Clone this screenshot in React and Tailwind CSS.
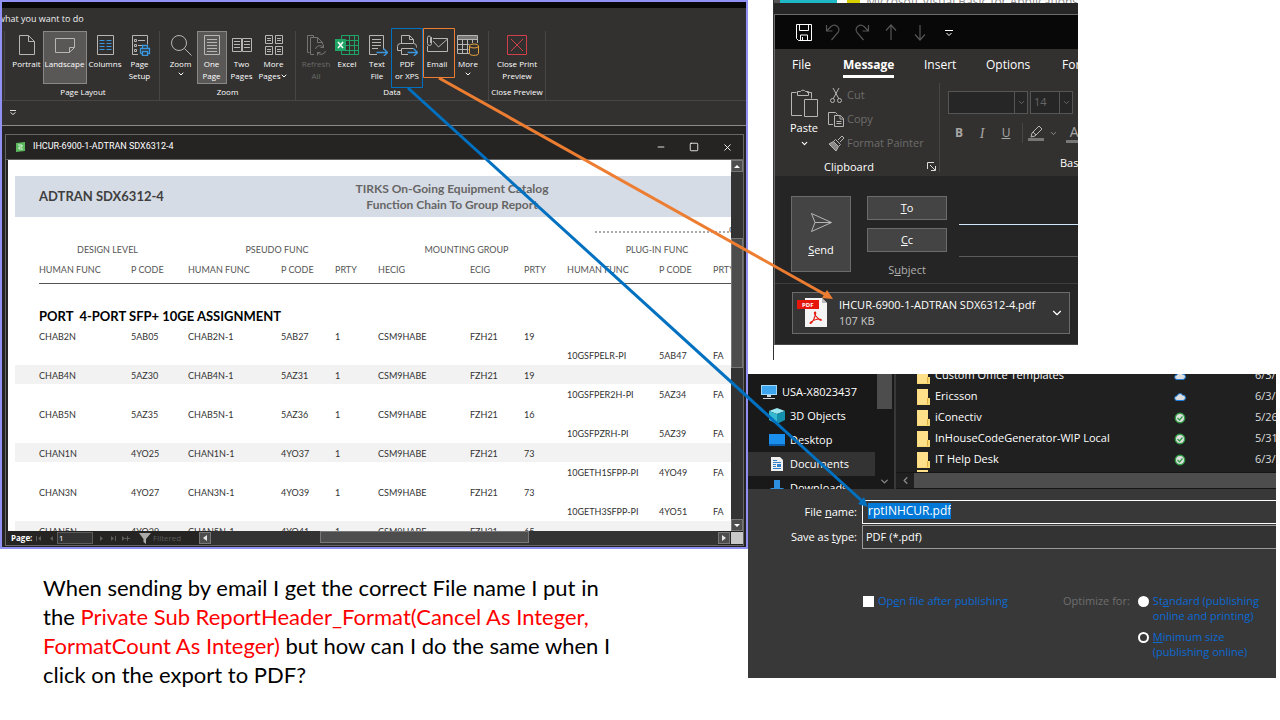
/**
 * Help slide — Access print preview, Outlook message and the Save As dialog,
 * with two arrows that follow the file name from the ribbon to each target.
 */
import { ChevronDown, ChevronLeft, Minus, Square, X } from 'lucide-react';

// ── Data ──────────────────────────────────────────────────────────────────────
const REPORT_ROWS = [
  ['CHAB2N', '5AB05', 'CHAB2N-1', '5AB27', '1', 'CSM9HABE', 'FZH21', '19', '10GSFPELR-PI', '5AB47'],
  ['CHAB4N', '5AZ30', 'CHAB4N-1', '5AZ31', '1', 'CSM9HABE', 'FZH21', '19', '10GSFPER2H-PI', '5AZ34'],
  ['CHAB5N', '5AZ35', 'CHAB5N-1', '5AZ36', '1', 'CSM9HABE', 'FZH21', '16', '10GSFPZRH-PI', '5AZ39'],
  ['CHAN1N', '4YO25', 'CHAN1N-1', '4YO37', '1', 'CSM9HABE', 'FZH21', '73', '10GETH1SFPP-PI', '4YO49'],
  ['CHAN3N', '4YO27', 'CHAN3N-1', '4YO39', '1', 'CSM9HABE', 'FZH21', '73', '10GETH3SFPP-PI', '4YO51'],
  ['CHAN5N', '4YO29', 'CHAN5N-1', '4YO41', '1', 'CSM9HABE', 'FZH21', '65', '', ''],
];

const COLUMNS = ['HUMAN FUNC', 'P CODE', 'HUMAN FUNC', 'P CODE', 'PRTY', 'HECIG', 'ECIG', 'PRTY', 'HUMAN FUNC', 'P CODE', 'PRTY'];

const FILES = [
  { name: 'Custom Office Templates', status: 'cloud', date: '6/3/2021' },
  { name: 'Ericsson', status: 'cloud', date: '6/3/2021' },
  { name: 'iConectiv', status: 'ok', date: '5/26/2021' },
  { name: 'InHouseCodeGenerator-WIP Local', status: 'ok', date: '5/31/2021' },
  { name: 'IT Help Desk', status: 'ok', date: '6/3/2021' },
];

// ── Ribbon icons ──────────────────────────────────────────────────────────────
const Icon = ({ children, w = 22, h = 22, className = '' }) => (
  <svg width={w} height={h} viewBox={`0 0 ${w} ${h}`} fill="none" stroke="#b8b6b4" strokeWidth="1" className={`shrink-0 ${className}`} aria-hidden="true">
    {children}
  </svg>
);

const PortraitIcon = () => (
  <Icon><path d="M3.5 1.5h9l6 6v13h-15zM12.5 1.5v6h6" /></Icon>
);
const LandscapeIcon = () => (
  <Icon><path d="M1.500 4.500h19v9l-5 5h-14zM20.500 13.500h-5v5" /></Icon>
);
const ColumnsIcon = () => (
  <Icon>
    <path d="M3.500 1.500h16v19h-16z" />
    <path d="M5.500 6.500h5M5.500 9.500h5M5.500 12.500h5M5.500 15.500h5M12.500 6.500h5M12.500 9.500h5M12.500 12.500h5M12.500 15.500h5" stroke="#3a96dd" />
  </Icon>
);
const SetupIcon = () => (
  <Icon>
    <path d="M9 20.500H3.500v-19h15v9M9 6.500h7M9 11.500h5M5.500 5.500h2v2h-2zM5.500 10.500h2v2h-2zM5.500 15.500h2v2h-2z" />
    <path d="M11.500 19.500v-5h9v5h-2M13.500 14v-2.500h5V14M13.500 17.500h5v4h-5zM11.500 19.500h2" stroke="#3a96dd" strokeWidth="1.300" />
  </Icon>
);
const ZoomIcon = () => (
  <Icon><circle cx="9" cy="9" r="7.500" /><path d="M14.500 14.500l7 7" /></Icon>
);
const OnePageIcon = () => (
  <Icon><path d="M3.500 1.500h15v19h-15zM6 5.500h10M6 8.500h10M6 11.500h10M6 14.500h10M6 17.500h10" /></Icon>
);
const TwoPagesIcon = () => (
  <Icon><path d="M1.500 4.500h9v13h-9zM11.500 4.500h9v13h-9zM3 7.500h6M3 10.500h6M3 13.500h6M13 7.500h6M13 10.500h6M13 13.500h6" /></Icon>
);
const MorePagesIcon = () => (
  <Icon><path d="M2.500 1.500h7v8h-7zM12.500 1.500h7v8h-7zM2.500 12.500h7v8h-7zM12.500 12.500h7v8h-7zM4 4.500h4M4 6.500h4M14 4.500h4M14 6.500h4M4 15.500h4M4 17.500h4M14 15.500h4M14 17.500h4" /></Icon>
);
const RefreshIcon = () => (
  <Icon className="opacity-50">
    <path d="M4.500 18.500h-2v-17h6v2M9 20.500H5.500v-17h7l5 5v2M12.500 3.500v5h5M10.500 15a4.500 4.500 0 018-1.500v-3M20.500 17a4.500 4.500 0 01-8 1.500v3M18.500 13.500h-3M12.500 18.500h3" />
  </Icon>
);
const ExcelIcon = () => (
  <Icon w={24}>
    <path d="M6.500 5V1.500h17v19h-17V17M11 6.500h12.500M11 11.500h12.500M11 16.500h12.500M14.500 1.500v19M19.500 1.500v19" stroke="#21a366" />
    <path d="M0 5h11v12H0z" fill="#21a366" stroke="none" />
    <path d="M3 8l5 6M8 8l-5 6" stroke="#fff" strokeWidth="1.500" />
  </Icon>
);
const TextFileIcon = () => (
  <Icon>
    <path d="M11 20.500H3.500v-19h14v14M6 5.500h9M6 8.500h9M6 11.500h9M6 14.500h6" />
    <path d="M10.500 18.500h11M17.500 14.500l4 4-4 4" stroke="#3a96dd" strokeWidth="1.300" />
  </Icon>
);
const PdfIcon = () => (
  <Icon>
    <path d="M5.500 9V1.500h8l4 4V9M13.500 1.500v4h4M5 16.500H1.500v-4a3 3 0 013-3h13a3 3 0 013 3v1M12 20.500H5.500v-6h12" />
    <path d="M11.500 18.500h10M17.500 14.500l4 4-4 4" stroke="#3a96dd" strokeWidth="1.300" />
  </Icon>
);
const EmailIcon = () => (
  <Icon w={24}>
    <path d="M8 4.500h14.500v13h-20V12M8 7l5.500 6 9-8M6.500 3v6.500a2 2 0 01-4 0v-6a1.500 1.500 0 013 0V9" />
  </Icon>
);
const MoreIcon = () => (
  <Icon>
    <path d="M12 19.500H.5v-18h20V9M.5 5.500h20M.5 10.500h12M.5 15.500h11M5.500 5.500v14M10.500 5.500v14M15.500 5.500V9" />
    <path d="M1 2h19v3H1z" fill="#797775" stroke="none" />
    <path d="M12.500 12v7.500c0 2.500 9 2.500 9 0V12" stroke="#e8a33d" />
    <ellipse cx="17" cy="12" rx="4.500" ry="2" stroke="#e8a33d" />
  </Icon>
);
const CloseIcon = () => (
  <Icon><path d="M1.500 1.500h19v19h-19zM5 5l12 12M17 5L5 17" stroke="#d13f4a" /></Icon>
);

// ── Ribbon parts ──────────────────────────────────────────────────────────────
const RibbonButton = ({ icon: Glyph, lines, width, active = false, disabled = false, chevron }) => (
  <button
    type="button"
    disabled={disabled}
    className={[
      'flex h-[53px] shrink-0 flex-col items-center border pt-[2px] text-[8px] leading-[12px] whitespace-nowrap',
      active ? 'border-[#8a8886] bg-[#5a5856]' : 'border-transparent',
      disabled ? 'text-[#6b6967]' : 'text-white',
      width,
    ].join(' ')}
  >
    <Glyph />
    <span className="mt-[2px]">{lines[0]}</span>
    <span className="flex items-center">
      {lines[1]}
      {chevron && <ChevronDown size={8} strokeWidth={3} aria-hidden="true" />}
    </span>
  </button>
);

const RibbonGroup = ({ label, className = '', children }) => (
  <div className={`shrink-0 border-r border-[#484644] ${className}`}>
    <div className="flex justify-center">{children}</div>
    <div className="pt-px pb-[2px] text-center text-[8px] leading-[13px] whitespace-nowrap text-white">{label}</div>
  </div>
);

// ── Report ────────────────────────────────────────────────────────────────────
const Report = () => (
  <div className="h-[371px] min-w-0 flex-1 overflow-hidden bg-white pt-4 pl-[7px] font-[Lato,sans-serif]">
    <div className="flex h-[41px] items-center bg-[#d6dce5] pt-px pl-6">
      <h2 className="w-[228px] text-[13px] font-bold text-[#3f3f3f]">ADTRAN SDX6312-4</h2>
      <h3 className="w-[370px] text-center text-[12px] leading-4 font-bold text-[#666]">
        TIRKS On-Going Equipment Catalog<br />Function Chain To Group Report
      </h3>
    </div>
    <div className="mt-[10px] ml-[580px] flex h-[6px] items-end overflow-hidden">
      <div className="w-[134px] shrink-0 border-b-2 border-dotted border-[#aaa]" />
      <span className="text-[9px] leading-[6px] text-[#666]">C</span>
    </div>
    <table className="mt-[7px] w-full table-fixed border-collapse text-left text-[9px] leading-[20px] whitespace-nowrap text-[#333]">
      <colgroup>
        <col className="w-[116px]" />
        <col className="w-[57px]" />
        <col className="w-[93px]" />
        <col className="w-[54px]" />
        <col className="w-[43px]" />
        <col className="w-[92px]" />
        <col className="w-[54px]" />
        <col className="w-[43px]" />
        <col className="w-[92px]" />
        <col className="w-[54px]" />
        <col />
      </colgroup>
      <thead className="text-[#555]">
        <tr>
          <th colSpan={2} className="pl-3 text-center font-normal">DESIGN LEVEL</th>
          <th colSpan={3} className="pr-3 text-center font-normal">PSEUDO FUNC</th>
          <th colSpan={3} className="pr-3 text-center font-normal">MOUNTING GROUP</th>
          <th colSpan={3} className="pl-4 text-center font-normal">PLUG-IN FUNC</th>
        </tr>
        <tr>
          {COLUMNS.map((name, i) => (
            <th key={i} className="font-normal first:pl-6">{name}</th>
          ))}
        </tr>
      </thead>
      <tbody>
        <tr>
          <td colSpan={11} className="pl-6">
            <div className="mt-[3px] border-t border-[#555] pt-[22px] text-[13px] font-bold whitespace-pre text-black">
              PORT  4-PORT SFP+ 10GE ASSIGNMENT
            </div>
          </td>
        </tr>
      </tbody>
      {REPORT_ROWS.map((row) => (
        <tbody key={row[0]} className="group">
          <tr className="group-odd:bg-[#f2f2f2]">
            {row.slice(0, 8).map((cell, i) => (
              <td key={i} className="pt-[3px] pb-px leading-[15px] first:pl-6">{cell}</td>
            ))}
            <td colSpan={3} />
          </tr>
          <tr>
            <td colSpan={8} />
            <td className="pt-[2px] leading-[18px]">{row[8]}</td>
            <td className="pt-[2px] leading-[18px]">{row[9]}</td>
            <td className="pt-[2px] leading-[18px]">FA</td>
          </tr>
        </tbody>
      ))}
    </table>
  </div>
);

const Arrow = ({ d }) => (
  <svg width="11" height="11" viewBox="0 0 11 11" aria-hidden="true"><path d={d} fill="#e6e6e6" /></svg>
);

const AccessWindow = () => (
  <section className="border-2 border-[#9191f5] bg-[#252423] text-white">
    <div className="h-[6px] bg-[#080808]" />
    <div className="overflow-hidden bg-[#323130]">
      <div className="h-[23px] pt-[3px] text-[9px] leading-4 text-[#f0f0f0]"><span className="-ml-1">what you want to do</span></div>
      <div className="flex border-b border-[#484644] pl-[2px]">
        <RibbonGroup label="Page Layout" className="w-[156px] border-l pl-[2px]">
          <RibbonButton icon={PortraitIcon} lines={['Portrait']} width="w-[32px]" />
          <RibbonButton icon={LandscapeIcon} lines={['Landscape']} width="w-[44px]" active />
          <RibbonButton icon={ColumnsIcon} lines={['Columns']} width="w-[37px]" />
          <RibbonButton icon={SetupIcon} lines={['Page', 'Setup']} width="w-[32px]" />
        </RibbonGroup>
        <RibbonGroup label="Zoom" className="w-[136px]">
          <RibbonButton icon={ZoomIcon} lines={['Zoom']} width="w-[32px]" chevron />
          <RibbonButton icon={OnePageIcon} lines={['One', 'Page']} width="w-[30px]" active />
          <RibbonButton icon={TwoPagesIcon} lines={['Two', 'Pages']} width="w-[30px]" />
          <RibbonButton icon={MorePagesIcon} lines={['More', 'Pages']} width="w-[34px]" chevron />
        </RibbonGroup>
        <RibbonGroup label="Data" className="w-[193px]">
          <RibbonButton icon={RefreshIcon} lines={['Refresh', 'All']} width="w-[32px]" disabled />
          <RibbonButton icon={ExcelIcon} lines={['Excel']} width="w-[30px]" />
          <RibbonButton icon={TextFileIcon} lines={['Text', 'File']} width="w-[30px]" />
          <RibbonButton icon={PdfIcon} lines={['PDF', 'or XPS']} width="w-[30px]" />
          <RibbonButton icon={EmailIcon} lines={['Email']} width="w-[30px]" />
          <RibbonButton icon={MoreIcon} lines={['More']} width="w-[32px]" chevron />
        </RibbonGroup>
        <RibbonGroup label="Close Preview" className="w-[57px]">
          <RibbonButton icon={CloseIcon} lines={['Close Print', 'Preview']} width="w-[52px]" />
        </RibbonGroup>
      </div>
      <div className="flex h-[25px] items-center border-b border-[#8a8a8a] pl-2">
        <svg width="6" height="6" viewBox="0 0 6 6" aria-hidden="true"><path d="M0 .5h6M.5 2.500l2.500 2 2.500-2" stroke="#ddd" fill="none" /></svg>
      </div>
    </div>

    <div className="mt-2 mr-[2px] ml-[3px] border border-[#666]">
      <div className="flex h-[25px] items-center border-b border-[#666] pr-[10px] pl-[10px]">
        <svg width="9" height="10" viewBox="0 0 9 10" aria-hidden="true">
          <path d="M0 1l9-1v9l-9 1z" fill="#5cb85c" />
          <path d="M2 3h4v2H3v2h4" stroke="#d9f2d9" fill="none" />
        </svg>
        <h1 className="ml-2 font-[Roboto,sans-serif] text-[9px]">IHCUR-6900-1-ADTRAN SDX6312-4</h1>
        <div className="ml-auto flex gap-[23px]">
          <button type="button" aria-label="Minimize"><Minus size={10} /></button>
          <button type="button" aria-label="Maximize"><Square size={10} /></button>
          <button type="button" aria-label="Close"><X size={11} /></button>
        </div>
      </div>
      <div className="ml-[2px] flex">
        <Report />
        <div className="flex w-[12px] flex-col bg-[#333]">
          <button type="button" aria-label="Scroll up" className="h-[12px] border border-[#777] bg-[#4d4d4d]">
            <svg width="9" height="9" viewBox="0 0 9 9" aria-hidden="true"><path d="M2 6l3-3 3 3z" fill="#fff" /></svg>
          </button>
          <div className="mt-[66px] h-[130px] border border-[#777] bg-[#4d4d4d]" />
          <button type="button" aria-label="Scroll down" className="mt-auto h-[12px] border border-[#777] bg-[#4d4d4d]">
            <svg width="9" height="9" viewBox="0 0 9 9" aria-hidden="true"><path d="M2 3h6l-3 3z" fill="#fff" /></svg>
          </button>
        </div>
      </div>
      <div className="flex h-[14px] items-center pl-[5px] text-[8px]">
        <label htmlFor="page" className="w-[22px] font-bold">Page:</label>
        <svg width="20" height="9" viewBox="0 0 20 9" className="mx-[2px]" fill="#5c5c5c" aria-hidden="true">
          <path d="M1 2h1v5H1zM6 2v5L3 4.500zM18 2v5l-3-2.500z" />
        </svg>
        <input id="page" defaultValue="1" className="h-[12px] w-[36px] border border-[#5c5c5c] bg-[#333] pl-[1px] text-[8px]" />
        <svg width="34" height="9" viewBox="0 0 34 9" className="ml-[4px]" fill="#5c5c5c" aria-hidden="true">
          <path d="M3 2v5l3-2.500zM14 2v5l3-2.500zM18 2h1v5h-1zM25 2v5l3-2.500zM28 4h5v1h-5zM30 2h1v5h-1z" />
        </svg>
        <svg width="12" height="11" viewBox="0 0 12 11" className="ml-[8px]" aria-hidden="true"><path d="M0 0h12L7 6v5L4.500 9V6z" fill="#aaa" /></svg>
        <span className="ml-[2px] w-[46px] leading-[10px] text-[#5c5c5c]">Filtered</span>
        <button type="button" aria-label="Scroll left" className="h-[12px] w-[12px] border border-[#777] bg-[#4d4d4d]"><Arrow d="M7 2v6L3 5z" /></button>
        <div className="flex h-full flex-1 bg-[#333]">
          <div className="ml-[109px] h-[12px] w-[209px] border border-[#777] bg-[#4d4d4d]" />
        </div>
        <button type="button" aria-label="Scroll right" className="h-[12px] w-[12px] border border-[#777] bg-[#4d4d4d]"><Arrow d="M3 2v6l4-3z" /></button>
        <div className="ml-px h-[12px] w-[12px] bg-[#c8c8c8]" />
      </div>
    </div>
    <div className="h-px" />
  </section>
);

// ── Outlook message ───────────────────────────────────────────────────────────
const ClipRow = ({ label, children }) => (
  <button type="button" className="flex h-6 items-center gap-[2px] whitespace-nowrap text-[#6e6c6a]">
    <Icon w={17} h={17}>{children}</Icon>
    {label}
  </button>
);

const BarIcon = ({ label, children }) => (
  <button type="button" aria-label={label}>
    <svg width="16" height="17" viewBox="0 0 16 17" fill="none" stroke="#555" strokeWidth="1.200" aria-hidden="true">{children}</svg>
  </button>
);

const OutlookWindow = () => (
  <section className="h-[360px] w-[305px] overflow-hidden border-l border-[#333] text-[11px] text-white">
    <div className="flex h-[3px] overflow-hidden leading-[3px] text-[#888]">
      <div className="w-[6px] bg-[#555]" />
      <div className="w-[58px] bg-[#1fb8c6]" />
      <div className="ml-[10px] w-[14px] bg-[#d8d000]" />
      <span className="ml-[6px] text-[12px] leading-[3px] whitespace-nowrap">Microsoft Visual Basic for Applications</span>
    </div>
    <div className="h-[11px] bg-[#262626]" />
    <div className="border-t border-l border-[#6b6b6b] bg-[#252525]">
      <div className="flex h-[34px] items-center gap-[13px] bg-[#080808] pt-px pl-[21px]">
        <svg width="16" height="17" viewBox="0 0 16 17" fill="none" stroke="#fff" aria-hidden="true">
          <path d="M.5.5h15v16h-13l-2-2zM3.500.5v6h9v-6M4.500 16v-5h7v5M6.500 16v-3" />
        </svg>
        <BarIcon label="Undo"><path d="M1.500 1v6h6M1.500 7L6 2.500c4-3.500 10 1 7 6L6.500 16" /></BarIcon>
        <BarIcon label="Redo"><path d="M14.500 1v6h-6M14.500 7L10 2.500c-4-3.500-10 1-7 6L9.500 16" /></BarIcon>
        <BarIcon label="Previous item"><path d="M8 16V1M3 6.500L8 1l5 5.500" /></BarIcon>
        <BarIcon label="Next item"><path d="M8 1v15M3 10.500L8 16l5-5.500" /></BarIcon>
        <svg width="8" height="8" viewBox="0 0 8 8" fill="none" stroke="#fff" className="ml-1" aria-hidden="true"><path d="M0 1.500h8M1.500 4l2.500 2.500L6.500 4" /></svg>
      </div>

      <div className="bg-[#323130]">
        <nav className="flex h-[31px] pl-[17px] text-[12px] leading-[31px] whitespace-nowrap">
          <a href="#file" className="w-[51px] shrink-0">File</a>
          <div className="w-[81px] shrink-0">
            <a href="#message" className="inline-block h-[29px] border-b-[3px] border-white font-bold">Message</a>
          </div>
          <a href="#insert" className="w-[62px] shrink-0">Insert</a>
          <a href="#options" className="w-[76px] shrink-0">Options</a>
          <a href="#format">Format Text</a>
        </nav>

        <div className="flex h-[96px] pt-[3px]">
          <div className="w-[164px] shrink-0">
            <div className="flex h-[75px] pl-[13px]">
              <button type="button" className="flex w-[32px] flex-col items-center pt-[3px] leading-4">
                <Icon w={30} h={34}>
                  <path d="M13 29.500H2.500v-23h5M18 6.500h4.500v6M8.500 9.500v-4h3a3 3 0 015 0h3v4zM15.500 13.500h13v17h-13z" />
                </Icon>
                <span>Paste</span>
                <ChevronDown size={9} strokeWidth={3} className="mt-[3px]" />
              </button>
              <div className="ml-2">
                <ClipRow label="Cut">
                  <path d="M5 1l6 11M11 1L5 12" /><circle cx="4.500" cy="13.500" r="2" /><circle cx="11.500" cy="13.500" r="2" />
                </ClipRow>
                <ClipRow label="Copy">
                  <path d="M5 13.500H.5v-12h7l2 2M6.500 4.500h6l3 3v8h-9zM12 4.500v3.500h3.500M8.500 10.500h5M8.500 12.500h5" />
                </ClipRow>
                <ClipRow label="Format Painter">
                  <path d="M10 5l4-4 2 2-4 4M7.500 4.500l5 5-2 2-5-5z" /><path d="M5.500 6.500L1 9l7 7 2.500-4.500z" fill="#8a8886" />
                </ClipRow>
              </div>
            </div>
            <div className="relative pt-px text-center leading-4">
              <span className="pr-4">Clipboard</span>
              <svg width="9" height="9" viewBox="0 0 9 9" fill="none" stroke="#ddd" className="absolute top-1 right-[3px]" aria-hidden="true">
                <path d="M.5 7V.5H7M3 3l5 5M8.500 4v4.500H4" />
              </svg>
            </div>
          </div>
          <div className="h-[89px] shrink-0 border-l border-[#484644] pt-2 pl-2">
            <div className="flex gap-[2px]">
              <div className="relative">
                <select aria-label="Font" className="block h-[23px] w-[80px] appearance-none border border-[#555] bg-[#262626]"><option></option></select>
                <div className="absolute top-0 right-0 flex h-[23px] w-[14px] items-center justify-center border-l border-[#555] text-[#777]"><ChevronDown size={9} /></div>
              </div>
              <div className="relative">
                <select aria-label="Font size" className="block h-[23px] w-[43px] appearance-none border border-[#555] bg-[#262626] pl-[3px] text-[#666]"><option>14</option></select>
                <div className="absolute top-0 right-0 flex h-[23px] w-[14px] items-center justify-center border-l border-[#555] text-[#777]"><ChevronDown size={9} /></div>
              </div>
            </div>
            <div className="mt-2 flex h-[22px] items-center text-[12px] text-[#a8a6a4]">
              <button type="button" className="w-[22px] text-center font-bold">B</button>
              <button type="button" className="w-[24px] text-center font-[Liberation_Serif,serif] text-[14px] italic">I</button>
              <button type="button" className="w-[24px] text-center underline">U</button>
              <div className="mx-1 h-5 border-l border-[#484644]" />
              <Icon w={18} h={18}>
                <path d="M5 9l7-7 3 3-7 7-4 1zM6 8l3 3" /><path d="M1 14h16v3H1z" fill="#777" stroke="none" />
              </Icon>
              <ChevronDown size={9} className="ml-1 mr-2" />
              <span className="border-b-[3px] border-[#777] text-[14px] leading-4">&nbsp;A</span>
            </div>
            <div className="mt-[11px] pl-28 leading-4 whitespace-nowrap">Basic Text</div>
          </div>
        </div>
      </div>

      <div className="flex border-b border-[#3d3d3d] pt-[20px] pl-4">
        <button type="button" className="flex h-[76px] w-[60px] flex-col items-center border border-[#6b6b6b] bg-[#444] pt-[15px]">
          <Icon w={23} h={20}><path d="M1.500 1.500l20 9-20 9 3.500-9zM5 10.500h16" /></Icon>
          <span className="mt-[10px] leading-4"><u>S</u>end</span>
        </button>
        <div className="ml-4 flex w-[80px] flex-col gap-2 pb-[3px] text-center">
          <button type="button" className="h-6 border border-[#6b6b6b] bg-[#444]"><u>T</u>o</button>
          <button type="button" className="h-6 border border-[#6b6b6b] bg-[#444]"><u>C</u>c</button>
          <label htmlFor="subject" className="leading-5 text-[#b0b0b0]">S<u>u</u>bject</label>
        </div>
        <div className="ml-3 flex flex-1 flex-col">
          <input aria-label="To" className="h-[29px] w-full border-b border-[#cfe6fb]" />
          <input aria-label="Cc" className="h-8 w-full border-b border-[#5c5c5c]" />
          <input id="subject" className="h-5 w-full" />
        </div>
      </div>

      <div className="border-b border-[#484848] pt-2 pr-2 pb-[10px] pl-[17px]">
        <button type="button" className="flex h-[42px] w-full items-center border border-[#6b6b6b] bg-[#363636] pl-1 text-left whitespace-nowrap">
          <svg width="32" height="30" viewBox="0 0 32 30" className="shrink-0" aria-hidden="true">
            <path d="M8 0h17l5 5v24H8z" fill="#f5f5f5" />
            <path d="M25 0v5h5z" fill="#bbb" />
            <path d="M0 2h22v9H0z" fill="#e5180b" />
            <text x="5" y="9" fill="#fff" fontSize="6" fontWeight="700" fontFamily="Open Sans, sans-serif">PDF</text>
            <path d="M18 14c-2 1 1 5 5 8 2 1 2-1-1-1-4 0-9 3-9 4s3 0 5-7c1-3 1-4 0-4z" fill="none" stroke="#e5180b" strokeWidth="1.100" />
          </svg>
          <span className="ml-[10px] leading-4">
            IHCUR-6900-1-ADTRAN SDX6312-4.pdf<br /><span className="text-[#c8c8c8]">107 KB</span>
          </span>
          <ChevronDown size={14} className="mr-[5px] ml-auto shrink-0" />
        </button>
      </div>
    </div>
  </section>
);

// ── Save As dialog ────────────────────────────────────────────────────────────
const NavItem = ({ label, active = false, root = false, children }) => (
  <li>
    <a href="#folder" className={`flex h-6 items-center gap-[5px] whitespace-nowrap ${root ? 'pl-[13px]' : 'pl-[21px]'} ${active ? 'bg-[#333]' : ''}`}>
      <svg width="16" height="16" viewBox="0 0 16 16" className="shrink-0" aria-hidden="true">{children}</svg>
      {label}
    </a>
  </li>
);

const Folder = () => (
  <svg width="13" height="16" viewBox="0 0 13 16" className="shrink-0" aria-hidden="true">
    <path d="M0 0h11v9h2v7H0z" fill="#f8d775" />
    <path d="M0 0h11v15H1z" fill="#ffe08a" />
    <path d="M10.500 9v6" stroke="#e0b040" />
  </svg>
);

const Status = ({ type }) => (
  <svg width="12" height="12" viewBox="0 0 12 12" className="shrink-0" aria-label={type}>
    {type === 'cloud' ? (
      <path d="M3 9.500a2.300 2.300 0 010-4.600 3 3 0 015.500-.8 2.700 2.700 0 01.5 5.400z" fill="#ddd" stroke="#1a7fe0" />
    ) : (
      <g fill="none">
        <circle cx="6" cy="6" r="4.700" fill="#ddd" stroke="#2f9e44" strokeWidth="1.400" />
        <path d="M3.500 6l2 2 3-3.500" stroke="#2f9e44" strokeWidth="1.200" />
      </g>
    )}
  </svg>
);

const SaveDialog = () => (
  <section className="mt-[14px] mr-1 overflow-hidden bg-[#383838] pb-[19px] text-[11px] text-white">
    <div className="flex h-[115px]">
      <div className="flex w-[146px] shrink-0 overflow-hidden bg-[#191919]">
        <ul className="w-[127px] pt-[6px]">
          <NavItem label="USA-X8023437" root>
            <path d="M0 1h16v10H0z" fill="#9fd8fb" /><path d="M1 2h14v8H1z" fill="#3ea6ee" /><path d="M6 11h4v2H6zM2 14h12v1H2z" fill="#cfd8dc" />
          </NavItem>
          <NavItem label="3D Objects">
            <path d="M8 0l8 3-8 3-8-3z" fill="#9be7f2" /><path d="M0 3l8 3v10l-8-4z" fill="#35b9d0" /><path d="M16 3L8 6v10l8-4z" fill="#1490ad" />
          </NavItem>
          <NavItem label="Desktop">
            <path d="M0 2h16v12H0z" fill="#1b8fee" /><path d="M0 12h16v2H0z" fill="#0b5cad" />
          </NavItem>
          <NavItem label="Documents" active>
            <path d="M2 1h9l3 3v11H2z" fill="#f0f0f0" /><path d="M4 4h4v1H4zM4 6h8v1H4zM4 8h3v1H4zM8 8h4v3H8zM4 10h3v1H4zM4 12h8v1H4z" fill="#2f80c8" />
          </NavItem>
          <NavItem label="Downloads">
            <path d="M5 0h6v8h4l-7 7-7-7h4z" fill="#2d8fe0" />
          </NavItem>
        </ul>
        <div className="ml-[2px] flex w-[15px] flex-col items-center justify-between text-[#888]">
          <div className="h-[35px] w-full bg-[#4d4d4d]" />
          <ChevronDown size={11} strokeWidth={3} className="mb-[2px]" />
        </div>
      </div>
      <div className="ml-[2px] flex min-w-0 flex-1 flex-col bg-[#202020]">
        <div className="h-[98px] overflow-hidden">
          <ul className="-mt-[9px]">
            {FILES.map((f) => (
              <li key={f.name} className="flex h-[21px] items-center whitespace-nowrap">
                <span className="flex w-[278px] shrink-0 items-center gap-[5px] pl-[21px]"><Folder />{f.name}</span>
                <Status type={f.status} />
                <span className="ml-[69px] text-[#ddd]">{f.date}</span>
              </li>
            ))}
            <li className="flex h-[21px] items-start pl-[21px]"><Folder /></li>
          </ul>
        </div>
        <div className="flex h-[17px] items-center border-y border-[#151515] pl-1 text-[#888]">
          <ChevronLeft size={11} strokeWidth={3} />
          <div className="ml-[3px] h-[15px] flex-1 bg-[#4d4d4d]" />
        </div>
      </div>
    </div>

    <div className="grid grid-cols-[109px_1fr] items-center gap-x-[5px] gap-y-[1px] pt-[11px] text-right">
      <label htmlFor="filename">File <u>n</u>ame:</label>
      <div className="flex h-6 items-start border border-r-0 border-white pt-[2px] pl-[5px]">
        <input id="filename" defaultValue="rptINHCUR.pdf" className="field-sizing-content h-[16px] bg-[#0078d7] text-[12px] leading-4" />
      </div>
      <label htmlFor="filetype">Save as <u>t</u>ype:</label>
      <select id="filetype" className="h-6 appearance-none border border-r-0 border-[#9a9a9a] bg-[#333] pl-[3px] text-left">
        <option>PDF (*.pdf)</option>
      </select>
    </div>

    <div className="mt-[44px] flex items-start pl-[115px] leading-[15px] text-[#0b6ad4]">
      <label className="flex w-[200px] gap-1 whitespace-nowrap">
        <input type="checkbox" className="mt-[3px] h-[11px] w-[11px] appearance-none bg-white" />
        <span>Op<u>e</u>n file after publishing</span>
      </label>
      <fieldset className="flex gap-2 whitespace-nowrap">
        <span className="text-[#6e6e6e]">Optimize for:</span>
        <div className="flex flex-col gap-[6px]">
          <label className="flex gap-1">
            <input type="radio" name="optimize" className="mt-[3px] h-[11px] w-[11px] appearance-none rounded-full bg-white" />
            <span>St<u>a</u>ndard (publishing<br />online and printing)</span>
          </label>
          <label className="flex gap-1">
            <input type="radio" name="optimize" defaultChecked className="mt-[3px] h-[11px] w-[11px] appearance-none rounded-full border-[2px] border-white" />
            <span><u>M</u>inimum size<br />(publishing online)</span>
          </label>
        </div>
      </fieldset>
    </div>
  </section>
);

// ── Slide ─────────────────────────────────────────────────────────────────────
export default function App() {
  return (
    <main className="relative grid min-h-screen grid-cols-[748fr_532fr] items-start bg-white font-['Open_Sans',sans-serif]">
      <div className="min-w-0">
        <AccessWindow />
        <p className="mt-6 pl-[43px] font-[Lato,sans-serif] text-[22px] leading-[29px] text-black">
          When sending by email I get the correct File name I put in<br />
          the <span className="text-[#fe0000]">Private Sub ReportHeader_Format(Cancel As Integer,<br />
          FormatCount As Integer)</span> but how can I do the same when I<br />
          click on the export to PDF?
        </p>
      </div>
      <div className="min-w-0">
        <div className="pl-[25px]"><OutlookWindow /></div>
        <SaveDialog />
      </div>

      {/* Callout boxes and arrows lie over both windows */}
      <svg viewBox="0 0 1280 720" preserveAspectRatio="none" className="pointer-events-none absolute inset-0 h-full w-full" fill="none" aria-hidden="true">
        <path d="M391.500 28.500h31v59h-31z" stroke="#0070c0" />
        <path d="M423.500 28.500h31v49h-31z" stroke="#ed7d31" />
        <path d="M408 88L862 501" stroke="#0070c0" strokeWidth="3" />
        <path d="M868 507l-10-3 6-7z" fill="#0070c0" />
        <path d="M439 78L826 295" stroke="#ed7d31" strokeWidth="3" />
        <path d="M833 299l-11-1 5-8z" fill="#ed7d31" />
      </svg>
    </main>
  );
}
